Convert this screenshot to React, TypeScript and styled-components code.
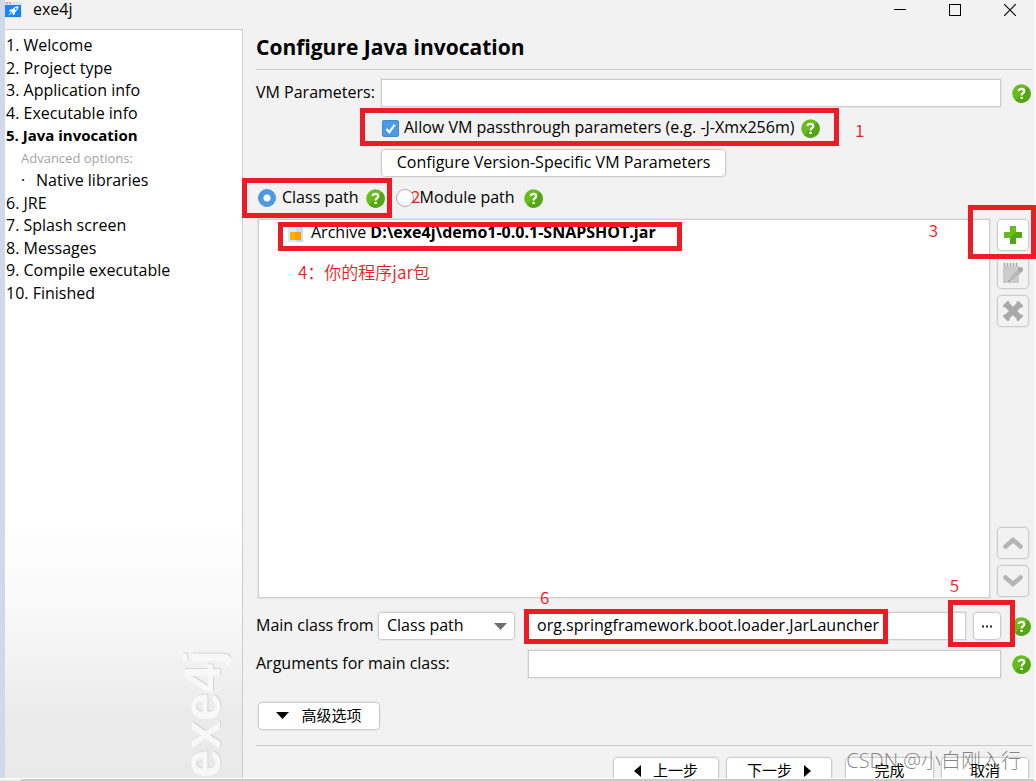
import React from "react";
import styled, { createGlobalStyle } from "styled-components";

const RED = "#ed1c24";
const LINE = "#cdcdcd";

const GlobalStyle = createGlobalStyle`
  * { box-sizing: border-box; }
  body { margin: 0; background: #f2f2f2; }
  body, button, input, select {
    font-family: "Open Sans", "Noto Sans CJK SC", sans-serif;
    font-size: 16px;
    line-height: 22px;
    color: #000;
  }
`;

const Desktop = styled.div`
  display: flex;
  flex-direction: column;
  height: 100vh;
  overflow: hidden;
  padding-right: 2px;
  background: #fafafa;
`;

const Window = styled.div`
  flex: 1;
  min-height: 0;
  display: flex;
  flex-direction: column;
  border-left: 5px solid #cfd9ea;
  background: #f2f2f2;
`;

const BottomEdge = styled.div`
  height: 3px;
  border-top: 1px solid #fff;
  background: linear-gradient(90deg, #f0f0f0 21px, #cbcbcb 21px);
`;

const TitleBar = styled.header`
  display: flex;
  align-items: center;
  height: 29px;
  padding: 0 18px 9px 0;
`;

const AppName = styled.span`
  flex: 1;
  margin-left: 11px;
  padding-bottom: 2px;
`;

const WindowButtons = styled.div`
  display: flex;
  gap: 43px;
`;

const BareButton = styled.button`
  display: flex;
  flex: none;
  padding: 0;
  border: 0;
  background: none;
`;

const Body = styled.div`
  flex: 1;
  min-height: 0;
  display: flex;
`;

const Sidebar = styled.nav`
  position: relative;
  flex: none;
  width: 238px;
  padding: 4px 0 0 1px;
  overflow: hidden;
  border-top: 1px solid ${LINE};
  border-right: 1px solid ${LINE};
  background: linear-gradient(180deg, #fff 65%, #f8f8f8 78%, #ebebeb 92%, #e9e9e9);
`;

const Steps = styled.ul`
  position: relative;
  z-index: 1;
  display: grid;
  grid-auto-rows: 1fr;
  align-items: center;
  height: 270px;
  margin: 0;
  padding: 0;
  list-style: none;
`;

const Step = styled.li<{ $current?: boolean; $kind?: "note" | "sub" }>`
  padding-left: ${(p) => (p.$kind ? 15 : 0)}px;
  font-weight: ${(p) => (p.$current ? 700 : 400)};
  font-size: ${(p) => (p.$kind === "note" ? 13 : p.$current ? 15 : 16)}px;
  color: ${(p) => (p.$kind === "note" ? "#a3a3a3" : "#000")};
`;

const Bullet = styled.span`
  display: inline-block;
  width: 15px;
`;

const Brand = styled.div`
  position: absolute;
  right: 14px;
  bottom: 0;
  writing-mode: vertical-rl;
  transform: rotate(180deg);
  font: 700 51px/50px "Liberation Sans", sans-serif;
  color: #f8f8f8;
  text-shadow: 1px 1px 0 #d6d6d6;
`;

const Main = styled.main`
  flex: 1;
  min-width: 0;
  display: flex;
  flex-direction: column;
  padding: 0 2px 0 13px;
`;

const Heading = styled.h1`
  height: 41px;
  margin: 0 0 9px;
  border-bottom: 1px solid ${LINE};
  font-size: 21px;
  line-height: 36px;
`;

const Form = styled.div`
  flex: 1;
  min-height: 0;
  display: flex;
  flex-direction: column;
  gap: 7px;
`;

const Row = styled.div<{ $indent?: boolean }>`
  position: relative;
  flex: none;
  display: flex;
  align-items: center;
  height: 28px;
  padding-right: 1px;
  padding-left: ${(p) => (p.$indent ? 125 : 0)}px;
`;

const Label = styled.label<{ $width?: number }>`
  flex: none;
  width: ${(p) => (p.$width ? p.$width + "px" : "auto")};
  padding-bottom: 2px;
  white-space: nowrap;
`;

const TextBox = styled.input`
  flex: 1;
  min-width: 0;
  height: 28px;
  padding: 0 8px 3px;
  border: 1px solid ${LINE};
  outline: 1px solid #e6e6e6;
  background: #fff;
`;

const Button = styled.button<{ $width?: number; $disabled?: boolean; $cjk?: boolean }>`
  flex: none;
  display: flex;
  align-items: center;
  justify-content: center;
  gap: 12px;
  width: ${(p) => (p.$width ? p.$width + "px" : "auto")};
  height: 28px;
  padding: 0 0 ${(p) => (p.$cjk ? 3 : 2)}px;
  font-size: ${(p) => (p.$cjk ? 15 : 16)}px;
  border: 1px solid ${LINE};
  border-radius: 4px;
  outline: 1px solid #e8e8e8;
  background: #fff;
  white-space: nowrap;
  svg { position: relative; top: 1px; }
`;

const ToolButton = styled(Button)`
  width: 32px;
  height: 32px;
  padding: 0;
  background: ${(p) => (p.$disabled ? "#f2f2f2" : "#fff")};
  svg { top: 0; }
`;

const HelpButton = styled(BareButton)<{ $gap?: number }>`
  margin-left: ${(p) => p.$gap ?? 11}px;
`;

const Tick = styled.span`
  position: relative;
  display: flex;
  flex: none;
  margin: 0 5px 0 1px;
  svg { position: absolute; inset: 0; pointer-events: none; }
`;

const CheckBox = styled.input`
  appearance: none;
  width: 17px;
  height: 17px;
  margin: 0;
  border-radius: 2px;
  border: 1px solid #b5b5b5;
  background: #fff;
  &:checked { background: #4d9ae4; border-color: #4189d0; }
`;

const Radio = styled.input`
  appearance: none;
  flex: none;
  width: 18px;
  height: 18px;
  margin: 0 6px 0 2px;
  border: 1px solid #ababab;
  border-radius: 50%;
  background: #fff;
  &:checked {
    border-color: #4a93dc;
    background: radial-gradient(circle, #fff 3px, #4d9ae4 4px);
  }
`;

const ListArea = styled.div`
  position: relative;
  flex: 1;
  min-height: 0;
  display: flex;
  gap: 7px;
  padding: 0 3px 0 2px;
`;

const ListBox = styled.ul`
  flex: 1;
  margin: 0;
  padding: 1px 0 0 29px;
  list-style: none;
  border: 1px solid ${LINE};
  outline: 1px solid #e6e6e6;
  background: #fff;
`;

const ListItem = styled.li`
  display: flex;
  align-items: center;
  gap: 8px;
  white-space: pre;
  svg { position: relative; top: 2px; }
`;

const Tools = styled.div`
  flex: none;
  display: flex;
  flex-direction: column;
  gap: 6px;
  padding-bottom: 1px;
`;

const Spacer = styled.div`
  flex: 1;
`;

const Gap = styled.span<{ $size: number }>`
  flex: 0 0 ${(p) => p.$size}px;
`;

const LowerForm = styled.div`
  flex: none;
  display: flex;
  flex-direction: column;
  gap: 10px;
  padding: 7px 0 15px;
`;

const SelectWrap = styled.div`
  position: relative;
  flex: none;
  width: 137px;
  margin-right: 13px;
  svg { position: absolute; right: 8px; top: 11px; pointer-events: none; }
`;

const Select = styled.select`
  appearance: none;
  display: block;
  width: 100%;
  height: 28px;
  padding: 0 8px 3px;
  border: 1px solid ${LINE};
  border-radius: 3px;
  outline: 1px solid #e8e8e8;
  background: #fff;
`;

const AdvancedRow = styled(Row)`
  margin-top: 14px;
  padding-left: 2px;
`;

const Footer = styled.footer`
  position: relative;
  flex: none;
  display: flex;
  justify-content: flex-end;
  gap: 7px;
  height: 33px;
  padding: 11px 3px 0 0;
  overflow: hidden;
  border-top: 1px solid ${LINE};
`;

const FinishGroup = styled.div`
  display: flex;
  gap: 7px;
  margin-left: 6px;
`;

const Watermark = styled.div`
  position: absolute;
  right: 11px;
  top: 1px;
  font-size: 20px;
  line-height: 28px;
  font-weight: 300;
  color: rgba(80, 80, 80, 0.7);
  white-space: nowrap;
  pointer-events: none;
`;

/* Red marker frame laid over a control group. */
const Frame = styled.div<{ $top: number; $h: number; $w: number; $left?: number; $right?: number }>`
  position: absolute;
  z-index: 2;
  top: ${(p) => p.$top}px;
  height: ${(p) => p.$h}px;
  width: ${(p) => p.$w}px;
  left: ${(p) => (p.$left === undefined ? "auto" : p.$left + "px")};
  right: ${(p) => (p.$right === undefined ? "auto" : p.$right + "px")};
  border: 5px solid ${RED};
  pointer-events: none;
`;

const Note = styled.span<{ $top: number; $left?: number; $right?: number }>`
  position: absolute;
  z-index: 1;
  top: ${(p) => p.$top}px;
  left: ${(p) => (p.$left === undefined ? "auto" : p.$left + "px")};
  right: ${(p) => (p.$right === undefined ? "auto" : p.$right + "px")};
  font-family: "Noto Sans CJK SC", sans-serif;
  font-weight: 350;
  font-size: 17px;
  line-height: 24px;
  color: ${RED};
  white-space: nowrap;
  pointer-events: none;
`;

const Help = ({ gap }: { gap?: number }) => (
  <HelpButton type="button" aria-label="Help" $gap={gap}>
    <svg width="19" height="19" viewBox="0 0 19 19">
      <circle cx="9.5" cy="9.5" r="9.3" fill="#68bd1e" />
      <path d="M18.8 9.5A9.3 9.3 0 0 1 3.2 16.3L15.8 2.7A9.3 9.3 0 0 1 18.8 9.5Z" fill="#55a617" />
      <path d="M6.7 7.1C6.7 4.1 12.3 4.1 12.3 7.2C12.3 9.2 9.6 9.1 9.6 11.4" fill="none" stroke="#fff" strokeWidth="2.2" />
      <rect x="8.4" y="12.7" width="2.4" height="2.3" rx=".6" fill="#fff" />
    </svg>
  </HelpButton>
);

const Triangle = ({ dir, color = "#000" }: { dir: "left" | "right" | "down"; color?: string }) =>
  dir === "down" ? (
    <svg width="13" height="7" viewBox="0 0 13 7"><path d="M0 0H13L6.5 7Z" fill={color} /></svg>
  ) : (
    <svg width="7" height="12" viewBox="0 0 7 12">
      <path d={dir === "left" ? "M7 0V12L0 6Z" : "M0 0V12L7 6Z"} fill={color} />
    </svg>
  );

export default function App() {
  return (
    <>
      <GlobalStyle />
      <Desktop>
        <Window>
          <TitleBar>
            <svg width="17" height="16" viewBox="0 0 17 16">
              <rect width="17" height="16" fill="#dfe1e5" />
              <path d="M1 1h2M4 1h2" stroke="#e8684a" />
              <rect y="3" width="16" height="12" fill="#1686f5" />
              <path d="M13.5 4.2C10.8 4.2 8.9 5.2 7.5 7.3L5.2 7.6L3.8 9.5L6 9.6L7.8 11.4L7.9 13.4L9.9 12L10.2 9.9C12.3 8.5 13.5 6.8 13.5 4.2ZM5.6 10.5L3.3 13.4L6.8 11.6Z" fill="#fff" />
              <circle cx="10.8" cy="7" r="1" fill="#1686f5" />
            </svg>
            <AppName>exe4j</AppName>
            <WindowButtons>
              <BareButton aria-label="Minimize">
                <svg width="12" height="12"><path d="M0 5.5H12" stroke="#000" /></svg>
              </BareButton>
              <BareButton aria-label="Maximize">
                <svg width="12" height="12"><rect x=".5" y=".5" width="11" height="11" fill="none" stroke="#000" /></svg>
              </BareButton>
              <BareButton aria-label="Close">
                <svg width="12" height="12"><path d="M0 0L12 12M12 0L0 12" stroke="#000" strokeWidth="1.1" /></svg>
              </BareButton>
            </WindowButtons>
          </TitleBar>
          <Body>
            <Sidebar>
              <Steps>
                <Step>1. Welcome</Step>
                <Step>2. Project type</Step>
                <Step>3. Application info</Step>
                <Step>4. Executable info</Step>
                <Step $current>5. Java invocation</Step>
                <Step $kind="note">Advanced options:</Step>
                <Step $kind="sub"><Bullet>·</Bullet>Native libraries</Step>
                <Step>6. JRE</Step>
                <Step>7. Splash screen</Step>
                <Step>8. Messages</Step>
                <Step>9. Compile executable</Step>
                <Step>10. Finished</Step>
              </Steps>
              <Brand>exe4j</Brand>
            </Sidebar>
            <Main>
              <Heading>Configure Java invocation</Heading>
              <Form>
                <Row>
                  <Label htmlFor="vm" $width={125}>VM Parameters:</Label>
                  <TextBox id="vm" />
                  <Help />
                </Row>
                <Row $indent>
                  <Tick>
                    <CheckBox type="checkbox" id="pass" defaultChecked />
                    <svg width="17" height="17"><path d="M4.5 9L7.3 12.3L12.8 4.6" fill="none" stroke="#fff" strokeWidth="2.2" /></svg>
                  </Tick>
                  <Label htmlFor="pass">Allow VM passthrough parameters (e.g. -J-Xmx256m)</Label>
                  <Help gap={7} />
                  <Frame $left={104} $top={-6} $w={479} $h={38} />
                  <Note $left={599} $top={4}>1</Note>
                </Row>
                <Row $indent>
                  <Button type="button" $width={345}>Configure Version-Specific VM Parameters</Button>
                </Row>
                <Row>
                  <Radio type="radio" name="path" id="cp" defaultChecked />
                  <Label htmlFor="cp">Class path</Label>
                  <Help gap={7} />
                  <Gap $size={9} />
                  <Radio type="radio" name="path" id="mp" />
                  <Label htmlFor="mp">Module path</Label>
                  <Help gap={9} />
                  <Frame $left={-14} $top={-6} $w={150} $h={40} />
                  <Note $left={155} $top={0}>2</Note>
                </Row>
                <ListArea>
                  <ListBox>
                    <ListItem>
                      <svg width="15" height="15">
                        <rect width="15" height="15" fill="#d3edfb" />
                        <rect x="8" width="7" height="15" fill="#b5e2fa" />
                        <rect x="2" y="5" width="11" height="8" fill="#ffa000" />
                        <rect x="2" y="5" width="5" height="8" fill="#ffb000" />
                      </svg>
                      <span>Archive <b>D:\exe4j\demo1-0.0.1-SNAPSHOT.jar</b></span>
                    </ListItem>
                  </ListBox>
                  <Tools>
                    <ToolButton type="button" aria-label="Add">
                      <svg width="18" height="18">
                        <path d="M6 0H12V6H18V12H12V18H6V12H0V6H6Z" fill="#68bd1e" />
                        <path d="M12 6H18V12H12V18H6V12Z" fill="#55a617" />
                      </svg>
                    </ToolButton>
                    <ToolButton type="button" aria-label="Edit" $disabled>
                      <svg width="20" height="20">
                        <path d="M0 3H16V20H0Z" fill="#cbcbcb" />
                        <path d="M1.5 0V3M4.5 0V3M7.5 0V3M10.5 0V3M13.5 0V3" stroke="#a5a5a5" strokeWidth="1.5" />
                        <path d="M5 19L6.5 14L15 5.5L19 9L10 17.5Z" fill="#b9b9b9" stroke="#dedede" strokeWidth=".8" />
                        <circle cx="17.5" cy="6.5" r="2.5" fill="#a8a8a8" />
                        <path d="M5 19L6 16.5L7.5 18Z" fill="#909090" />
                      </svg>
                    </ToolButton>
                    <ToolButton type="button" aria-label="Remove" $disabled>
                      <svg width="20" height="20">
                        <path d="M4 4L16 16M16 4L4 16" stroke="#a9a9a9" strokeWidth="6" />
                        <path d="M1.5 5L5 1.5M15 1.500L18.500 5M1.500 15L5 18.500M15 18.500L18.500 15" stroke="#a9a9a9" strokeWidth="3" strokeLinecap="round" />
                      </svg>
                    </ToolButton>
                    <Spacer />
                    <ToolButton type="button" aria-label="Move up" $disabled>
                      <svg width="20" height="12">
                        <path d="M2.5 9.5L10 3L17.5 9.5" fill="none" stroke="#b5b5b5" strokeWidth="4.5" strokeLinecap="round" />
                      </svg>
                    </ToolButton>
                    <ToolButton type="button" aria-label="Move down" $disabled>
                      <svg width="20" height="12">
                        <path d="M2.5 2.5L10 9L17.5 2.5" fill="none" stroke="#b5b5b5" strokeWidth="4.5" strokeLinecap="round" />
                      </svg>
                    </ToolButton>
                  </Tools>
                  <Frame $left={22} $top={3} $w={404} $h={29} />
                  <Frame $right={-4} $top={-14} $w={68} $h={54} />
                  <Note $left={42} $top={41}>4：你的程序jar包</Note>
                  <Note $right={94} $top={-1}>3</Note>
                </ListArea>
                <LowerForm>
                  <Row>
                    <Label htmlFor="src" $width={122}>Main class from</Label>
                    <SelectWrap>
                      <Select id="src" defaultValue="c">
                        <option value="c">Class path</option>
                        <option value="m">Module path</option>
                      </Select>
                      <Triangle dir="down" color="#6e6e6e" />
                    </SelectWrap>
                    <TextBox aria-label="Main class" defaultValue="org.springframework.boot.loader.JarLauncher" />
                    <Gap $size={7} />
                    <Button type="button" $width={28} aria-label="Browse">
                      <svg width="11" height="3"><path d="M0 1.5H2M4 1.5H6M8 1.5H10" stroke="#222" strokeWidth="2" /></svg>
                    </Button>
                    <Help />
                    <Frame $left={268} $top={-3} $w={364} $h={35} />
                    <Frame $right={17} $top={-12} $w={67} $h={47} />
                    <Note $left={284} $top={-27}>6</Note>
                    <Note $right={73} $top={-39}>5</Note>
                  </Row>
                  <Row>
                    <Label htmlFor="args" $width={272}>Arguments for main class:</Label>
                    <TextBox id="args" />
                    <Help />
                  </Row>
                  <AdvancedRow>
                    <Button type="button" $width={122} $cjk><Triangle dir="down" />高级选项</Button>
                  </AdvancedRow>
                </LowerForm>
              </Form>
              <Footer>
                <Button type="button" $width={106} $cjk><Triangle dir="left" />上一步</Button>
                <Button type="button" $width={106} $cjk>下一步<Triangle dir="right" /></Button>
                <FinishGroup>
                  <Button type="button" $width={89} $cjk>完成</Button>
                  <Button type="button" $width={88} $cjk>取消</Button>
                </FinishGroup>
                <Watermark>CSDN @小白刚入行</Watermark>
              </Footer>
            </Main>
          </Body>
        </Window>
        <BottomEdge />
      </Desktop>
    </>
  );
}
